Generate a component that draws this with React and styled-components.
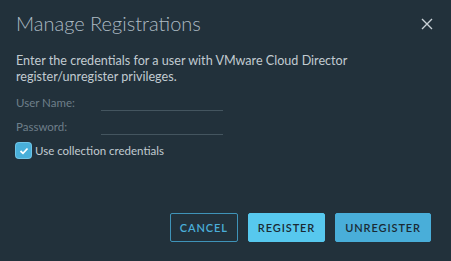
import styled, { createGlobalStyle } from "styled-components";

const GlobalStyle = createGlobalStyle`
  html, body {
    margin: 0;
    padding: 0;
    background: #22313b;
  }
  * { box-sizing: border-box; }
`;

export default function App() {
  return (
    <>
      <GlobalStyle />
      <Modal>
        <Header>
          <Title>Manage Registrations</Title>
          <CloseButton aria-label="Close">
            <svg width="12" height="12" viewBox="0 0 12 12">
              <path d="M1 1L11 11M11 1L1 11" stroke="#c9d1d6" strokeWidth="1.4" />
            </svg>
          </CloseButton>
        </Header>
        <Body>
          <Description>
            Enter the credentials for a user with VMware Cloud Director
            <br />
            register/unregister privileges.
          </Description>
          <Form>
            <Field>
              <Label>User Name:</Label>
              <Input type="text" />
            </Field>
            <Field>
              <Label>Password:</Label>
              <Input type="password" />
            </Field>
          </Form>
          <CheckRow>
            <CheckBox>
              <svg width="10" height="8" viewBox="0 0 10 8">
                <path d="M1.5 4L4 6.3L8.5 1.5" stroke="#fff" strokeWidth="1.7" fill="none" />
              </svg>
            </CheckBox>
            <CheckLabel>Use collection credentials</CheckLabel>
          </CheckRow>
        </Body>
        <Footer>
          <Button variant="outline">CANCEL</Button>
          <Button variant="light">REGISTER</Button>
          <Button variant="primary">UNREGISTER</Button>
        </Footer>
      </Modal>
    </>
  );
}

const Modal = styled.div`
  width: 451px;
  height: 261px;
  background: #22313b;
  font-family: "Lato", "Liberation Sans", sans-serif;
  display: flex;
  flex-direction: column;
`;

const Header = styled.div`
  display: flex;
  align-items: center;
  justify-content: space-between;
  padding: 11px 18px 0 16px;
`;

const Title = styled.h1`
  margin: 0;
  font-size: 20px;
  font-weight: 300;
  color: #adbbc4;
  line-height: 24px;
`;

const CloseButton = styled.button`
  background: none;
  border: none;
  padding: 0;
  display: flex;
  cursor: pointer;
  margin-top: 2px;
`;

const Body = styled.div`
  padding: 0 16px;
`;

const Description = styled.p`
  margin: 18px 0 0;
  font-size: 12.6px;
  line-height: 16px;
  color: #c1cbd1;
`;

const Form = styled.div`
  margin-top: 6px;
  display: flex;
  flex-direction: column;
  gap: 4px;
`;

const Field = styled.div`
  display: flex;
  align-items: flex-end;
  height: 20px;
`;

const Label = styled.label`
  width: 85px;
  font-size: 11.5px;
  color: #6e7f8a;
  line-height: 16px;
`;

const Input = styled.input`
  width: 122px;
  height: 20px;
  background: transparent;
  border: none;
  border-bottom: 1px solid #44555f;
  outline: none;
  color: #c1cbd1;
`;

const CheckRow = styled.div`
  display: flex;
  align-items: center;
  gap: 4px;
  margin-top: 8px;
`;

const CheckBox = styled.span`
  width: 15px;
  height: 15px;
  border-radius: 3px;
  background: #49afd9;
  box-shadow: 0 0 0 1px #6fc4e6;
  display: flex;
  align-items: center;
  justify-content: center;
`;

const CheckLabel = styled.span`
  font-size: 11.5px;
  color: #c1cbd1;
`;

const Footer = styled.div`
  margin-top: auto;
  display: flex;
  justify-content: flex-end;
  gap: 10px;
  padding: 0 20px 19px 0;
`;

const Button = styled.button`
  height: 29px;
  padding: 0 9px;
  min-width: 66px;
  border-radius: 2px;
  font-family: "Lato", "Liberation Sans", sans-serif;
  font-size: 11px;
  font-weight: 600;
  letter-spacing: 0.9px;
  cursor: pointer;
  border: 1px solid
    ${p => (p.variant === "outline" ? "#3f93b8" : p.variant === "light" ? "#57c8ee" : "#49aed9")};
  background: ${p =>
    p.variant === "outline" ? "transparent" : p.variant === "light" ? "#57c8ee" : "#49aed9"};
  color: ${p => (p.variant === "outline" ? "#4aaed9" : "#1a2a33")};
`;
